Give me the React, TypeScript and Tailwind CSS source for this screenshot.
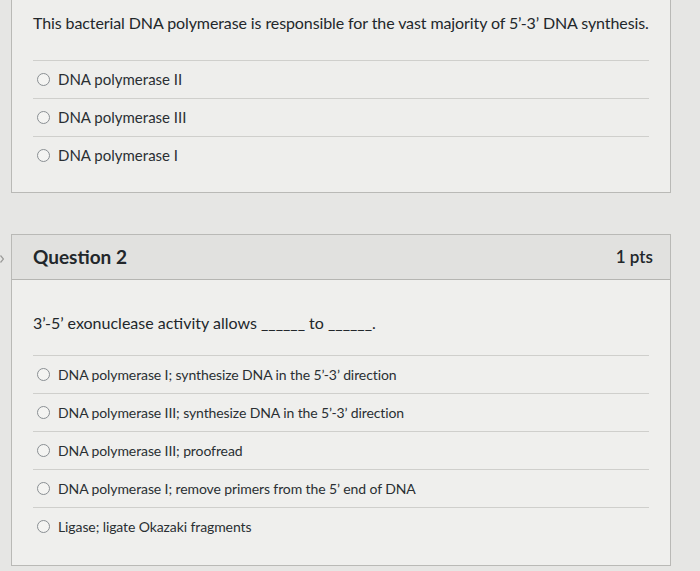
const q1Answers = ["DNA polymerase II", "DNA polymerase III", "DNA polymerase I"];

const q2Answers = [
  "DNA polymerase I; synthesize DNA in the 5\u2019-3\u2019 direction",
  "DNA polymerase III; synthesize DNA in the 5\u2019-3\u2019 direction",
  "DNA polymerase III; proofread",
  "DNA polymerase I; remove primers from the 5\u2019 end of DNA",
  "Ligase; ligate Okazaki fragments",
];

function Answer({ label, big }: { label: string; big?: boolean }) {
  return (
    <div className="flex h-[38px] items-center border-t border-[#cfcfcc] pl-[4px]">
      <span className="mr-[8px] h-[13px] w-[13px] shrink-0 rounded-full border border-[#8a8f93] bg-[#f4f4f2]" />
      <span className={big ? "text-[15px] text-[#2a2f33]" : "text-[14px] tracking-[-0.1px] text-[#2a2f33]"}>
        {label}
      </span>
    </div>
  );
}

export default function App() {
  return (
    <div className="h-[571px] w-[700px] overflow-hidden bg-[#e6e6e4] pl-[11px] pr-[29px] font-['Lato',sans-serif]">
      {/* Question 1 (top cut off) */}
      <div className="h-[193px] border-x border-b border-[#b9b9b6] bg-[#eeeeec] px-[21px] pt-[11px]">
        <p className="whitespace-nowrap text-[16px] leading-[24px] tracking-[-0.1px] text-[#22272b]">
          This bacterial DNA polymerase is responsible for the vast majority of 5&#8217;-3&#8217; DNA synthesis.
        </p>
        <div className="mt-[25px]">
          {q1Answers.map((a) => (
            <Answer key={a} label={a} big />
          ))}
        </div>
      </div>

      {/* Question 2 */}
      <div className="relative mt-[41px] h-[332px] border border-[#b9b9b6] bg-[#efefed]">
        <svg className="absolute -left-[12px] top-[20px]" width="4" height="8" viewBox="0 0 4 8">
          <path d="M0.5 0.5 L3.5 4 L0.5 7.5" fill="none" stroke="#9a9a98" strokeWidth="1.2" />
        </svg>
        <div className="flex h-[45px] items-center justify-between border-b border-[#b5b5b2] bg-[#e1e1df] pl-[21px] pr-[17px]">
          <h2 className="text-[19px] font-bold text-[#22272b]">Question 2</h2>
          <span className="text-[17px] font-semibold text-[#22272b]">1 pts</span>
        </div>
        <div className="px-[21px]">
          <p className="mt-[32px] text-[16px] leading-[22px] text-[#22272b]">
            3&#8217;-5&#8217; exonuclease activity allows ______ to ______.
          </p>
          <div className="mt-[21px]">
            {q2Answers.map((a) => (
              <Answer key={a} label={a} />
            ))}
          </div>
        </div>
      </div>
    </div>
  );
}
